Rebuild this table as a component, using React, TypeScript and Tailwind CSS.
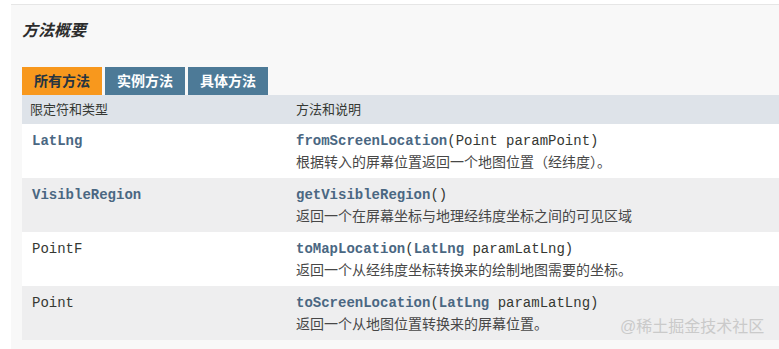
import React from "react";

const mono = { fontFamily: '"Liberation Mono", "Noto Sans CJK SC", monospace' };

function Link({ children }: { children: React.ReactNode }) {
  return <span className="font-bold text-[#4a6782]">{children}</span>;
}

const rows: { type: React.ReactNode; method: React.ReactNode; desc: string }[] = [
  {
    type: <Link>LatLng</Link>,
    method: (
      <>
        <Link>fromScreenLocation</Link>(Point paramPoint)
      </>
    ),
    desc: "根据转入的屏幕位置返回一个地图位置（经纬度）。",
  },
  {
    type: <Link>VisibleRegion</Link>,
    method: (
      <>
        <Link>getVisibleRegion</Link>()
      </>
    ),
    desc: "返回一个在屏幕坐标与地理经纬度坐标之间的可见区域",
  },
  {
    type: <span>PointF</span>,
    method: (
      <>
        <Link>toMapLocation</Link>(<Link>LatLng</Link> paramLatLng)
      </>
    ),
    desc: "返回一个从经纬度坐标转换来的绘制地图需要的坐标。",
  },
  {
    type: <span>Point</span>,
    method: (
      <>
        <Link>toScreenLocation</Link>(<Link>LatLng</Link> paramLatLng)
      </>
    ),
    desc: "返回一个从地图位置转换来的屏幕位置。",
  },
];

export default function App() {
  return (
    <div
      className="relative w-[779px] h-[349px] overflow-hidden bg-white text-[#353833]"
      style={{ fontFamily: '"Liberation Sans", "Noto Sans CJK SC", sans-serif' }}
    >
      <div className="ml-[11px] mt-[4px] w-[820px] h-[400px] border-t border-[#e6e6e6] bg-[#f8f8f8] pl-[11px]">
        <div className="pt-[15px] h-[62px] text-[16px] leading-[22px] font-bold italic text-[#2c2c2c]">
          方法概要
        </div>
        <div className="flex gap-[3px]">
          <div className="w-[80px] h-[28px] flex items-center justify-center bg-[#f8981d] text-[#253441] text-[14px] font-bold">
            所有方法
          </div>
          <div className="w-[80px] h-[28px] flex items-center justify-center bg-[#4d7a97] text-white text-[14px] font-bold">
            实例方法
          </div>
          <div className="w-[80px] h-[28px] flex items-center justify-center bg-[#4d7a97] text-white text-[14px] font-bold">
            具体方法
          </div>
        </div>
        <div className="flex h-[29px] items-center bg-[#dee3e9] text-[13px] text-[#353833]">
          <div className="w-[264px] pl-[8px]">限定符和类型</div>
          <div className="pl-[10px]">方法和说明</div>
        </div>
        {rows.map((r, i) => (
          <div
            key={i}
            className={`flex h-[54px] pt-[7px] ${i % 2 === 0 ? "bg-white" : "bg-[#eeeeef]"}`}
          >
            <div className="w-[264px] pl-[10px] text-[14px] leading-[20px]" style={mono}>
              {r.type}
            </div>
            <div className="pl-[10px]">
              <div className="text-[14px] leading-[20px] whitespace-nowrap" style={mono}>
                {r.method}
              </div>
              <div className="text-[14px] leading-[22px] text-[#474747] whitespace-nowrap">
                {r.desc}
              </div>
            </div>
          </div>
        ))}
      </div>
      <div className="absolute left-[620px] top-[316px] text-[16px] leading-[22px] text-[#cacaca] whitespace-nowrap">
        @稀土掘金技术社区
      </div>
    </div>
  );
}
